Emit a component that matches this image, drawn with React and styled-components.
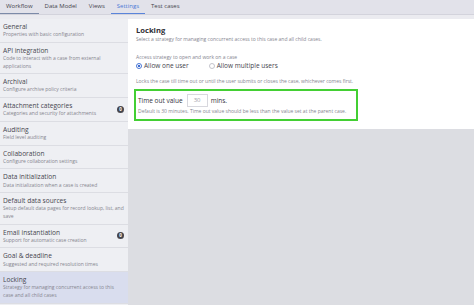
import React from 'react';
import styled, {createGlobalStyle} from 'styled-components';

const GlobalStyle = createGlobalStyle`
  * { box-sizing: border-box; margin: 0; padding: 0; }
  body {
    margin: 0;
    font-family: 'Open Sans', 'Liberation Sans', sans-serif;
    background: #ffffff;
  }
`;

const tabs = [
  {label: 'Workflow', mark: 'muted'},
  {label: 'Data Model'},
  {label: 'Views'},
  {label: 'Settings', mark: 'active'},
  {label: 'Test cases'},
];

const items = [
  {title: 'General', desc: 'Properties with basic configuration'},
  {title: 'API integration', desc: 'Code to interact with a case from external applications'},
  {title: 'Archival', desc: 'Configure archive policy criteria'},
  {title: 'Attachment categories', desc: 'Categories and security for attachments', badge: 0},
  {title: 'Auditing', desc: 'Field level auditing'},
  {title: 'Collaboration', desc: 'Configure collaboration settings'},
  {title: 'Data initialization', desc: 'Data initialization when a case is created'},
  {title: 'Default data sources', desc: 'Setup default data pages for record lookup, list, and save'},
  {title: 'Email instantiation', desc: 'Support for automatic case creation', badge: 0},
  {title: 'Goal & deadline', desc: 'Suggested and required resolution times'},
  {title: 'Locking', desc: 'Strategy for managing concurrent access to this case and all child cases', selected: true},
];

export default function App() {
  return (
    <Page>
      <GlobalStyle />
      <TabBar>
        {tabs.map(t => (
          <Tab key={t.label} mark={t.mark}>
            {t.label}
          </Tab>
        ))}
      </TabBar>
      <Strip />
      <Body>
        <Sidebar>
          {items.map(item => (
            <Item key={item.title} selected={item.selected}>
              <ItemText>
                <ItemTitle>{item.title}</ItemTitle>
                <ItemDesc>{item.desc}</ItemDesc>
              </ItemText>
              {item.badge !== undefined && <Badge>{item.badge}</Badge>}
            </Item>
          ))}
        </Sidebar>
        <Main>
          <Card>
            <Heading>Locking</Heading>
            <Hint>Select a strategy for managing concurrent access to this case and all child cases.</Hint>
            <Group>
              <Hint>Access strategy to open and work on a case</Hint>
              <RadioRow>
                <RadioOption>
                  <Radio checked />
                  Allow one user
                </RadioOption>
                <RadioOption>
                  <Radio />
                  Allow multiple users
                </RadioOption>
              </RadioRow>
            </Group>
            <Hint>Locks the case till time out or until the user submits or closes the case, whichever comes first.</Hint>
            <Highlight>
              <TimeoutRow>
                <span>Time out value</span>
                <NumberBox>30</NumberBox>
                <span>mins.</span>
              </TimeoutRow>
              <Hint>Default is 30 minutes. Time out value should be less than the value set at the parent case.</Hint>
            </Highlight>
          </Card>
          <Filler />
        </Main>
      </Body>
    </Page>
  );
}

const Page = styled.div`
  width: 474px;
  height: 305px;
  overflow: hidden;
  display: flex;
  flex-direction: column;
`;

const TabBar = styled.div`
  height: 15px;
  display: flex;
  align-items: flex-start;
  background: #e2e2ea;
  border-bottom: 1px solid #d3d3dc;
`;

const Tab = styled.div`
  height: 14px;
  padding: 0 6px;
  font-size: 6px;
  line-height: 12px;
  color: ${props => (props.mark === 'active' ? '#4a78d6' : '#45454d')};
  border-bottom: 1.5px solid
    ${props => (props.mark === 'active' ? '#5a84da' : props.mark === 'muted' ? '#7c8aa8' : 'transparent')};
`;

const Strip = styled.div`
  height: 4px;
  background: #ebebf0;
`;

const Body = styled.div`
  flex: 1;
  display: flex;
  min-height: 0;
`;

const Sidebar = styled.div`
  width: 128px;
  flex-shrink: 0;
  background: #eeeff3;
  display: flex;
  flex-direction: column;
`;

const Item = styled.div`
  display: flex;
  align-items: center;
  gap: 4px;
  padding: 3px 4px 3px 3px;
  border-bottom: 1px solid #dcdde3;
  background: ${props => (props.selected ? '#d9ddee' : 'transparent')};
`;

const ItemText = styled.div`
  flex: 1;
  display: flex;
  flex-direction: column;
`;

const ItemTitle = styled.div`
  font-size: 6.6px;
  line-height: 9.2px;
  color: #46464e;
`;

const ItemDesc = styled.div`
  font-size: 5px;
  line-height: 7.6px;
  color: #85858e;
`;

const Badge = styled.div`
  width: 7px;
  height: 7px;
  border-radius: 50%;
  background: #45454c;
  color: #ffffff;
  font-size: 4.5px;
  font-weight: 700;
  line-height: 7px;
  text-align: center;
  flex-shrink: 0;
`;

const Main = styled.div`
  flex: 1;
  display: flex;
  flex-direction: column;
`;

const Card = styled.div`
  background: #ffffff;
  padding: 6px 8px 8px 6px;
  display: flex;
  flex-direction: column;
`;

const Heading = styled.div`
  font-size: 7.6px;
  font-weight: 700;
  line-height: 10px;
  color: #2e2e34;
  padding-left: 2px;
`;

const Hint = styled.div`
  font-size: 5px;
  line-height: 8px;
  color: #858590;
  padding-left: 2px;
  white-space: nowrap;
`;

const Group = styled.div`
  margin: 10px 0 7px;
  display: flex;
  flex-direction: column;
`;

const RadioRow = styled.div`
  display: flex;
  gap: 20px;
  padding-left: 2px;
`;

const RadioOption = styled.div`
  display: flex;
  align-items: center;
  gap: 2px;
  font-size: 6.5px;
  line-height: 9px;
  color: #45454d;
`;

const Radio = styled.span`
  width: 6px;
  height: 6px;
  border-radius: 50%;
  border: 1px solid ${props => (props.checked ? '#4a78d6' : '#c4c4cc')};
  background: ${props => (props.checked ? 'radial-gradient(circle, #3d6bd0 45%, #ffffff 55%)' : '#ffffff')};
`;

const Highlight = styled.div`
  margin-top: 4px;
  width: 224px;
  border: 2px solid #43cf33;
  padding: 3px 0 4px 0;
  display: flex;
  flex-direction: column;
`;

const TimeoutRow = styled.div`
  display: flex;
  align-items: center;
  gap: 3px;
  padding-left: 2px;
  font-size: 6.5px;
  color: #33333a;
`;

const NumberBox = styled.div`
  width: 21px;
  height: 13px;
  border: 1px solid #d8d8de;
  font-size: 6px;
  line-height: 11px;
  text-align: center;
  color: #a0a0a8;
  margin-left: 1px;
`;

const Filler = styled.div`
  flex: 1;
  background: #dcdde2;
`;
